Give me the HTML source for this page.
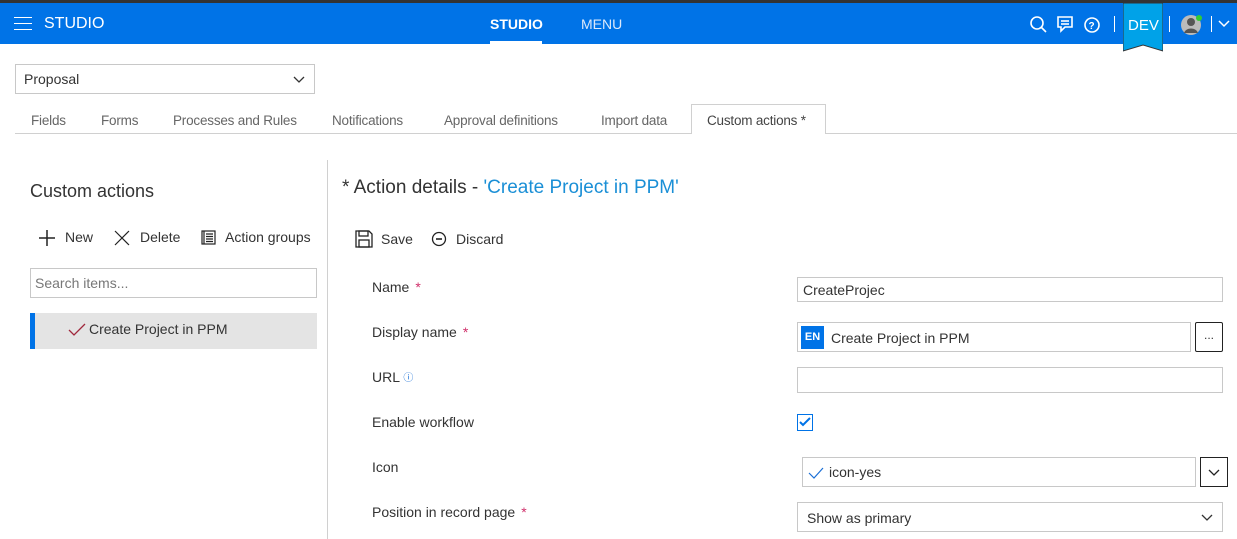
<!DOCTYPE html><html><head><style>
*{box-sizing:border-box;margin:0;padding:0}
body{width:1237px;height:539px;overflow:hidden;background:#fff;font-family:"Liberation Sans",sans-serif;color:#333;position:relative;font-size:14px}
.a{position:absolute}
.inp{position:absolute;border:1px solid #c8c8c8;background:#fff}
.lbl{position:absolute;left:372px;font-size:14px;color:#333}
.req{color:#d0306b;margin-left:6px}
.tab{position:absolute;top:113px;color:#666;font-size:13.5px;letter-spacing:-0.2px}
</style></head><body>
<div class="a" style="left:0;top:0;width:1237px;height:3px;background:#333"></div>
<div class="a" style="left:0;top:3px;width:1237px;height:41px;background:#0073e7"></div>
<div class="a" style="left:14px;top:17px;width:18px;height:1px;background:#fff"></div>
<div class="a" style="left:14px;top:23px;width:18px;height:1px;background:#fff"></div>
<div class="a" style="left:14px;top:29px;width:18px;height:1px;background:#fff"></div>
<div class="a" style="left:44px;top:15px;color:#fff;font-size:16px">STUDIO</div>
<div class="a" style="left:490px;top:16px;color:#fff;font-size:14px;font-weight:bold">STUDIO</div>
<div class="a" style="left:490px;top:41px;width:52px;height:3px;background:#fff"></div>
<div class="a" style="left:581px;top:16px;color:#dce9fb;font-size:14px">MENU</div>
<svg class="a" style="left:1028px;top:14px" width="80" height="22" fill="none" stroke="#fff" stroke-width="1.6">
<circle cx="9" cy="9" r="6"/><line x1="13" y1="13" x2="18" y2="18"/>
<path d="M30 3h14v10h-7l-4 4v-4h-3z"/><line x1="33" y1="7" x2="41" y2="7"/><line x1="33" y1="10" x2="41" y2="10"/>
<circle cx="64" cy="11" r="7"/><text x="60.5" y="15" fill="#fff" stroke="none" font-size="10" font-weight="bold" font-family="Liberation Sans">?</text>
</svg>
<div class="a" style="left:1114px;top:16px;width:1px;height:16px;background:#fff"></div>
<svg class="a" style="left:1123px;top:3px" width="40" height="50"><path d="M0 0h40v48l-20-6-20 6z" fill="#00a2e8" stroke="#333" stroke-width="1"/><text x="5" y="27" fill="#fff" font-size="15" font-family="Liberation Sans">DEV</text></svg>
<div class="a" style="left:1169px;top:16px;width:1px;height:16px;background:#fff"></div>
<svg class="a" style="left:1180px;top:13px" width="24" height="24"><circle cx="11" cy="12" r="10" fill="#bbb"/><circle cx="11" cy="9" r="4" fill="#555"/><path d="M4 20c2-6 12-6 14 0" fill="#555"/><circle cx="19" cy="5" r="3" fill="#3c3"/></svg>
<div class="a" style="left:1211px;top:16px;width:1px;height:16px;background:#fff"></div>
<svg class="a" style="left:1218px;top:20px" width="12" height="8"><path d="M1 1l5 5 5-5" stroke="#fff" fill="none" stroke-width="1.5"/></svg>

<div class="inp" style="left:15px;top:64px;width:300px;height:30px"><span class="a" style="left:8px;top:6px">Proposal</span><svg class="a" style="left:277px;top:11px" width="12" height="8"><path d="M1 1l5 5 5-5" stroke="#333" fill="none" stroke-width="1.3"/></svg></div>
<div class="a" style="left:15px;top:133px;width:1222px;height:1px;background:#d0d0d0"></div>
<div class="a" style="left:691px;top:104px;width:135px;height:30px;border:1px solid #d0d0d0;border-bottom:none;background:#fff"></div>
<div class="tab" style="left:31px">Fields</div>
<div class="tab" style="left:101px">Forms</div>
<div class="tab" style="left:173px">Processes and Rules</div>
<div class="tab" style="left:332px">Notifications</div>
<div class="tab" style="left:444px">Approval definitions</div>
<div class="tab" style="left:601px">Import data</div>
<div class="tab" style="left:707px;color:#444">Custom actions *</div>

<div class="a" style="left:327px;top:160px;width:1px;height:379px;background:#d0d0d0"></div>
<div class="a" style="left:30px;top:181px;font-size:18px">Custom actions</div>
<svg class="a" style="left:38px;top:229px" width="18" height="18"><path d="M9 1v16M1 9h16" stroke="#222" stroke-width="1.5"/></svg>
<div class="a" style="left:65px;top:229px">New</div>
<svg class="a" style="left:113px;top:229px" width="18" height="18"><path d="M2 2l14 14M16 2L2 16" stroke="#222" stroke-width="1.2"/></svg>
<div class="a" style="left:140px;top:229px">Delete</div>
<svg class="a" style="left:201px;top:230px" width="15" height="15" fill="none" stroke="#222" stroke-width="1.2"><rect x="1" y="1" width="13" height="13"/><path d="M3 1v13M5 4h7M5 6.5h7M5 9h7M5 11.5h7"/></svg>
<div class="a" style="left:225px;top:229px">Action groups</div>
<div class="inp" style="left:30px;top:268px;width:287px;height:30px"><span class="a" style="left:4px;top:6px;color:#777">Search items...</span></div>
<div class="a" style="left:30px;top:313px;width:287px;height:36px;background:#e4e4e4;border-left:5px solid #0073e7"></div>
<svg class="a" style="left:68px;top:323px" width="18" height="14"><path d="M1 7l5 5 11-11" stroke="#a0283c" fill="none" stroke-width="1.3"/></svg>
<div class="a" style="left:89px;top:321px">Create Project in PPM</div>

<div class="a" style="left:342px;top:177px;font-size:19px">* Action details - <span style="color:#1a8fd6">'Create Project in PPM'</span></div>
<svg class="a" style="left:355px;top:230px" width="18" height="18" fill="none" stroke="#222" stroke-width="1.3"><path d="M1 1h13l3 3v13H1z"/><rect x="4" y="1" width="9" height="5"/><rect x="4" y="10" width="10" height="7"/></svg>
<div class="a" style="left:381px;top:231px">Save</div>
<svg class="a" style="left:431px;top:231px" width="16" height="16"><circle cx="8" cy="8" r="6.5" stroke="#222" fill="none" stroke-width="1.3"/><path d="M5 8h6" stroke="#222" stroke-width="1.6"/></svg>
<div class="a" style="left:456px;top:231px">Discard</div>

<div class="lbl" style="top:279px">Name<span class="req">*</span></div>
<div class="inp" style="left:797px;top:277px;width:426px;height:25px"><span class="a" style="left:5px;top:4px">CreateProjec</span></div>
<div class="lbl" style="top:324px">Display name<span class="req">*</span></div>
<div class="inp" style="left:797px;top:322px;width:394px;height:30px"><div class="a" style="left:3px;top:3px;width:23px;height:23px;background:#0073e7;color:#fff;font-size:11px;font-weight:bold;text-align:center;line-height:23px">EN</div><span class="a" style="left:33px;top:7px">Create Project in PPM</span></div>
<div class="a" style="left:1195px;top:322px;width:28px;height:30px;border:1px solid #222;border-radius:2px;text-align:center;font-size:12px;line-height:24px">...</div>
<div class="lbl" style="top:369px">URL <span style="color:#1a6fd6;font-size:10px;vertical-align:top">ⓘ</span></div>
<div class="inp" style="left:797px;top:367px;width:426px;height:26px"></div>
<div class="lbl" style="top:414px">Enable workflow</div>
<div class="a" style="left:797px;top:414px;width:16px;height:17px;border:1px solid #0073e7"><svg width="14" height="14"><path d="M2 7l3 3 7-7" stroke="#0073e7" fill="none" stroke-width="2"/></svg></div>
<div class="lbl" style="top:459px">Icon</div>
<div class="inp" style="left:802px;top:457px;width:394px;height:30px"><svg class="a" style="left:5px;top:9px" width="16" height="12"><path d="M1 6l5 5 9-10" stroke="#1a6fd6" fill="none" stroke-width="1.2"/></svg><span class="a" style="left:26px;top:6px">icon-yes</span></div>
<div class="a" style="left:1200px;top:457px;width:28px;height:30px;border:1px solid #222"><svg class="a" style="left:7px;top:11px" width="12" height="8"><path d="M1 1l5 5 5-5" stroke="#222" fill="none" stroke-width="1.3"/></svg></div>
<div class="lbl" style="top:504px">Position in record page<span class="req">*</span></div>
<div class="inp" style="left:797px;top:502px;width:426px;height:30px"><span class="a" style="left:9px;top:7px">Show as primary</span><svg class="a" style="left:403px;top:11px" width="12" height="8"><path d="M1 1l5 5 5-5" stroke="#333" fill="none" stroke-width="1.3"/></svg></div>
</body></html>
